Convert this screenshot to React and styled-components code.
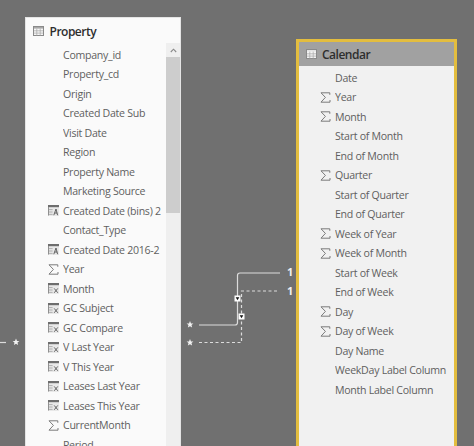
import styled, { createGlobalStyle } from 'styled-components'

const GlobalStyle = createGlobalStyle`
  html, body {
    margin: 0;
    padding: 0;
    background: #707070;
  }
`

const Canvas = styled.div`
  position: relative;
  width: 474px;
  height: 446px;
  overflow: hidden;
  background: #707070;
  font-family: "Open Sans", "Noto Sans", sans-serif;
`

const TableCard = styled.div`
  position: absolute;
  left: ${p => p.x}px;
  top: ${p => p.y}px;
  width: ${p => p.w}px;
  height: ${p => p.h}px;
  box-sizing: border-box;
  display: flex;
  flex-direction: column;
  overflow: hidden;
  background: ${p => p.selected ? '#f1f1f1' : '#fafafa'};
  border: ${p => p.selected ? '3px solid #e3bd3f' : '1px solid #e4e4e4'};
`

const TableHeader = styled.div`
  flex: none;
  height: ${p => p.selected ? 24 : 26}px;
  padding-left: 7px;
  display: flex;
  align-items: center;
  gap: ${p => p.selected ? 5 : 5.5}px;
  background: ${p => p.selected ? '#a1a1a1' : 'transparent'};
  font-size: 12px;
  font-weight: 600;
  letter-spacing: -0.5px;
  color: #2e2e2e;
`

const TableBody = styled.div`
  flex: 1;
  min-height: 0;
  display: flex;
`

const FieldList = styled.div`
  flex: 1;
  min-width: 0;
  padding-top: ${p => p.pad}px;
  padding-right: ${p => p.clip}px;
`

const Field = styled.div`
  height: 19.5px;
  display: flex;
  align-items: center;
  font-size: 10.6px;
  letter-spacing: -0.28px;
  color: #5f5f5f;
  white-space: nowrap;
`

const IconSlot = styled.div`
  flex: none;
  width: ${p => p.w}px;
  padding-right: 4.5px;
  box-sizing: border-box;
  display: flex;
  justify-content: flex-end;
`

const FieldName = styled.div`
  flex: 1;
  min-width: 0;
  overflow: hidden;
`

const ScrollBar = styled.div`
  flex: none;
  width: 14px;
  margin-top: -1px;
  background: #efefef;
  display: flex;
  flex-direction: column;
`

const ScrollButton = styled.div`
  height: 14px;
  display: flex;
  align-items: center;
  justify-content: center;
`

const ScrollThumb = styled.div`
  height: 156px;
  background: #cdcdcd;
`

const TableIcon = ({ light }) => (
  <svg width="11" height="10" viewBox="0 0 11 10">
    <rect x="0.5" y="0.5" width="10" height="9" fill={light ? '#f4f4f4' : '#f6f6f6'} stroke="#8a8a8a" />
    <rect x="1" y="1" width="9" height="1.6" fill={light ? '#e4e4e4' : '#a8a8a8'} />
    <path d="M3.8 2.6v7M7.2 2.6v7M1 4.8h9M1 7.1h9" stroke="#a6a6a6" strokeWidth="0.7" fill="none" />
  </svg>
)

const SigmaIcon = () => (
  <svg width="11" height="11" viewBox="0 0 11 11">
    <path d="M9.8 2.8V0.8H1L5.4 5.4L1 10.2H10V8" fill="none" stroke="#6e6e6e" strokeWidth="0.9" />
  </svg>
)

const MeasureIcon = ({ spark }) => (
  <svg width="11" height="11" viewBox="0 0 11 11">
    <rect x="0" y="0" width="11" height="11" fill="#e8e8e8" />
    <rect x="0" y="0" width="11" height="2.2" fill="#6d6d6d" />
    <path d="M0.5 2v8.5" stroke="#8f8f8f" />
    <path d="M1 4.6h3.6M1 7h3.6M1 9.4h3.6" stroke="#a8a8a8" strokeWidth="0.9" />
    {spark
      ? <path d="M5.8 10.2L8 4L9.6 10.2M6.8 8H9.2" fill="none" stroke="#555" strokeWidth="0.9" />
      : <path d="M6.2 5.4L9.8 9.8M9.8 5.4L6.2 9.8" fill="none" stroke="#555" strokeWidth="0.9" />}
  </svg>
)

const icons = {
  sigma: <SigmaIcon />,
  calc: <MeasureIcon />,
  bins: <MeasureIcon spark />
}

const propertyFields = [
  ['Company_id'],
  ['Property_cd'],
  ['Origin'],
  ['Created Date Sub'],
  ['Visit Date'],
  ['Region'],
  ['Property Name'],
  ['Marketing Source'],
  ['Created Date (bins) 2', 'bins'],
  ['Contact_Type'],
  ['Created Date 2016-2', 'bins'],
  ['Year', 'sigma'],
  ['Month', 'calc'],
  ['GC Subject', 'calc'],
  ['GC Compare', 'calc'],
  ['V Last Year', 'calc'],
  ['V This Year', 'calc'],
  ['Leases Last Year', 'calc'],
  ['Leases This Year', 'calc'],
  ['CurrentMonth', 'sigma'],
  ['Period']
]

const calendarFields = [
  ['Date'],
  ['Year', 'sigma'],
  ['Month', 'sigma'],
  ['Start of Month'],
  ['End of Month'],
  ['Quarter', 'sigma'],
  ['Start of Quarter'],
  ['End of Quarter'],
  ['Week of Year', 'sigma'],
  ['Week of Month', 'sigma'],
  ['Start of Week'],
  ['End of Week'],
  ['Day', 'sigma'],
  ['Day of Week', 'sigma'],
  ['Day Name'],
  ['WeekDay Label Column'],
  ['Month Label Column']
]

const Fields = ({ items, slot, pad, clip = 0 }) => (
  <FieldList pad={pad} clip={clip}>
    {items.map(([name, type]) => (
      <Field key={name}>
        <IconSlot w={slot}>{icons[type]}</IconSlot>
        <FieldName>{name}</FieldName>
      </Field>
    ))}
  </FieldList>
)

const Connectors = styled.svg`
  position: absolute;
  left: 0;
  top: 0;
`

const Cardinality = styled.span`
  position: absolute;
  left: ${p => p.x}px;
  top: ${p => p.y}px;
  font-size: 11px;
  line-height: 12px;
  font-weight: 700;
  color: #efefef;
`

const Star = ({ x, y }) => (
  <path
    transform={`translate(${x} ${y})`}
    d="M0 -3.4L1 -1.1L3.4 -1L1.5 0.6L2.1 3L0 1.7L-2.1 3L-1.5 0.6L-3.4 -1L-1 -1.1Z"
    fill="#f2f2f2"
  />
)

const Direction = ({ x, y }) => (
  <g transform={`translate(${x} ${y})`}>
    <rect x="-3" y="-3" width="6" height="6" fill="#fff" />
    <path d="M-1.8 -1.2H1.8L0 1.8Z" fill="#111" />
  </g>
)

const Relationships = () => (
  <Connectors width="474" height="446" viewBox="0 0 474 446">
    <g fill="none" stroke="#dcdcdc" strokeWidth="1.2">
      <path d="M199 325H235Q237.5 325 237.5 322.5V275.5Q237.5 273 240 273H280" />
      <path d="M199 342.5H241.5V291H279" strokeDasharray="3 2.5" />
      <path d="M0 342.5H6" />
    </g>
    <Direction x={237.5} y={298.5} />
    <Direction x={241.5} y={316.5} />
    <Star x={190} y={324.5} />
    <Star x={190} y={342.5} />
    <Star x={16} y={342} />
  </Connectors>
)

export default function App() {
  return (
    <>
      <GlobalStyle />
      <Canvas>
        <Relationships />
        <Cardinality x={287} y={266}>1</Cardinality>
        <Cardinality x={287} y={285}>1</Cardinality>

        <TableCard x={25} y={17} w={156} h={440}>
          <TableHeader>
            <TableIcon />
            Property
          </TableHeader>
          <TableBody>
            <Fields items={propertyFields} slot={37} pad={1} clip={5} />
            <ScrollBar>
              <ScrollButton>
                <svg width="7" height="5" viewBox="0 0 7 5">
                  <path d="M0.8 4L3.5 1.2L6.2 4" fill="none" stroke="#8a8a8a" strokeWidth="1.1" />
                </svg>
              </ScrollButton>
              <ScrollThumb />
            </ScrollBar>
          </TableBody>
        </TableCard>

        <TableCard x={296} y={39} w={161} h={420} selected>
          <TableHeader selected>
            <TableIcon light />
            Calendar
          </TableHeader>
          <TableBody>
            <Fields items={calendarFields} slot={36} pad={2} />
          </TableBody>
        </TableCard>
      </Canvas>
    </>
  )
}
